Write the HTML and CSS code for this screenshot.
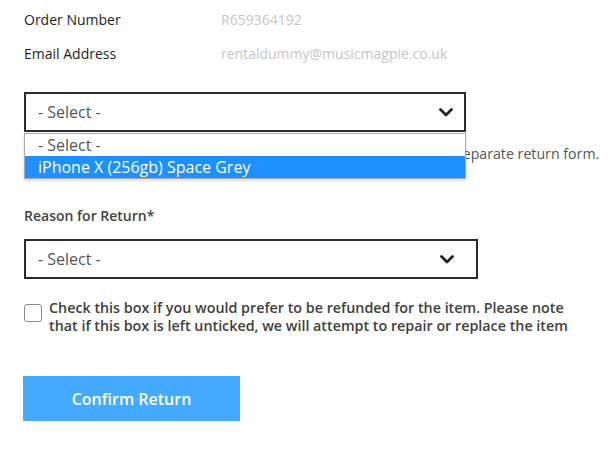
FILE: index.html
```html
<!DOCTYPE html>
<html lang="en">
<head>
<meta charset="utf-8">
<title>Return form</title>
<link rel="stylesheet" href="styles.css">
</head>
<body>
<div class="form">
  <div class="info-row"><span class="info-label">Order Number</span><span class="info-value">R659364192</span></div>
  <div class="info-row"><span class="info-label">Email Address</span><span class="info-value">rentaldummy@musicmagpie.co.uk</span></div>

  <div class="select-wrap">
    <div class="select select-item">
      <span class="select-text">- Select -</span>
      <svg class="chev" width="14" height="9" viewBox="0 0 14 9"><path d="M1.5 1.5 L7 7 L12.5 1.5" fill="none" stroke="#222" stroke-width="2.8" stroke-linecap="round" stroke-linejoin="round"/></svg>
    </div>
    <ul class="dropdown">
      <li class="option">- Select -</li>
      <li class="option option-active">iPhone X (256gb) Space Grey</li>
    </ul>
  </div>
  <p class="note">Every item that you wish to return will need to be submitted on a separate return form.</p>

  <div class="field-label">Reason for Return*</div>
  <div class="select select-reason">
    <span class="select-text">- Select -</span>
    <svg class="chev" width="14" height="9" viewBox="0 0 14 9"><path d="M1.5 1.5 L7 7 L12.5 1.5" fill="none" stroke="#222" stroke-width="2.8" stroke-linecap="round" stroke-linejoin="round"/></svg>
  </div>

  <label class="check-row">
    <span class="checkbox"></span>
    <span class="check-text">Check this box if you would prefer to be refunded for the item. Please note that if this box is left unticked, we will attempt to repair or replace the item</span>
  </label>

  <button class="confirm">Confirm Return</button>
</div>
</body>
</html>
```

FILE: styles.css
```css
* { box-sizing: border-box; }
html, body { margin: 0; padding: 0; background: #fff; }
body {
  font-family: "Open Sans", "Liberation Sans", sans-serif;
  font-size: 14px;
  color: #222;
}
.form {
  padding: 10px 0 0 24px;
}
.info-row {
  display: grid;
  grid-template-columns: 197px auto;
  line-height: 20px;
  margin-bottom: 14px;
}
.info-label { color: #1e1e1e; }
.info-value { color: #c6c6c6; }

.select-wrap {
  position: relative;
  width: 442px;
  margin-top: 28px;
}
.select {
  height: 40px;
  border: 2px solid #2a2a2a;
  display: flex;
  align-items: center;
  justify-content: space-between;
  padding-left: 12px;
  font-size: 16px;
  color: #555;
  background: #fff;
}
.select-item { width: 442px; padding-right: 11px; }
.select-reason { width: 454px; padding-right: 22px; }
.select-text { line-height: 20px; }
.chev { display: block; margin-top: 1px; }

.dropdown {
  position: absolute;
  left: 0;
  top: 41px;
  width: 442px;
  margin: 0;
  padding: 0;
  list-style: none;
  background: #fff;
  border: 1px solid #a9a9a9;
  box-shadow: 0 2px 3px rgba(0,0,0,0.15);
  z-index: 2;
}
.option {
  height: 22px;
  line-height: 22px;
  padding-left: 13px;
  font-size: 16px;
  color: #555;
}
.option-active {
  background: #1e90ff;
  color: #fff;
}

.note {
  margin: 12px 0 0;
  font-size: 14.2px;
  line-height: 20px;
  color: #555;
  white-space: nowrap;
}

.field-label {
  margin-top: 42px;
  line-height: 20px;
  font-weight: 600;
  color: #444;
}
.select-reason { margin-top: 13px; }

.check-row {
  display: flex;
  align-items: flex-start;
  gap: 7px;
  margin-top: 20px;
}
.checkbox {
  flex: none;
  width: 18px;
  height: 18px;
  margin-top: 5px;
  border: 1px solid #8a8a8a;
  border-radius: 3px;
  background: #fff;
}
.check-text {
  width: 535px;
  font-size: 14.3px;
  line-height: 18px;
  font-weight: 600;
  color: #404040;
}

.confirm {
  display: block;
  margin-top: 41px;
  width: 217px;
  height: 45px;
  border: none;
  background: #44aaff;
  color: #fff;
  font-family: "Open Sans", "Liberation Sans", sans-serif;
  font-size: 16px;
  font-weight: 600;
  padding: 0;
  margin-left: -1px;
}
```
